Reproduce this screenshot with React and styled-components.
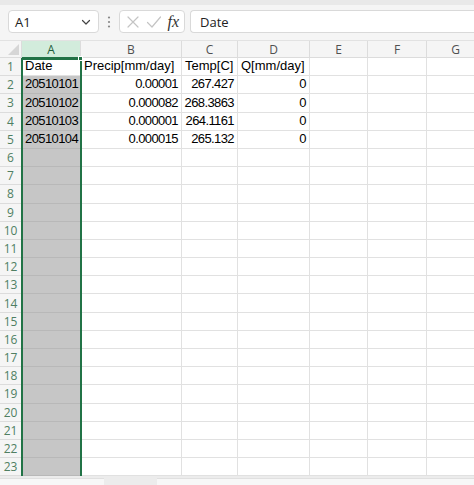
import React from 'react'
import styled, { createGlobalStyle } from 'styled-components'

const GlobalStyle = createGlobalStyle`
  html, body {
    margin: 0;
    padding: 0;
    background: #ffffff;
    overflow: hidden;
  }
  body {
    font-family: "Open Sans", "Noto Sans", sans-serif;
  }
`;

const columns = ['A', 'B', 'C', 'D', 'E', 'F', 'G'];
const widths = [59, 101, 56, 72, 58, 59, 58];

const data = [
  ['Date', 'Precip[mm/day]', 'Temp[C]', 'Q[mm/day]'],
  ['20510101', 0.00001, 267.427, 0],
  ['20510102', 0.000082, 268.3863, 0],
  ['20510103', 0.000001, 264.1161, 0],
  ['20510104', 0.000015, 265.132, 0],
];

const ROWS = 23;

const show = (v) => (typeof v === 'number' ? v.toFixed(7).replace(/0+$/, '').replace(/\.$/, '') : v);

function App() {
  return (
    <Page>
      <GlobalStyle />
      <TopStrip />
      <Toolbar>
        <NameBox>
          <span>A1</span>
          <svg width="12" height="12" viewBox="0 0 12 12">
            <path d="M2.5 4.5 L6 8 L9.5 4.5" fill="none" stroke="#444" strokeWidth="1.2" strokeLinecap="round" strokeLinejoin="round" />
          </svg>
        </NameBox>
        <Dots>
          <svg width="4" height="14" viewBox="0 0 4 14">
            <circle cx="2" cy="2.5" r="1.1" fill="#888" />
            <circle cx="2" cy="7" r="1.1" fill="#888" />
            <circle cx="2" cy="11.5" r="1.1" fill="#888" />
          </svg>
        </Dots>
        <ActionBox>
          <svg width="14" height="14" viewBox="0 0 14 14">
            <path d="M2 2 L12 12 M12 2 L2 12" stroke="#c4c4c4" strokeWidth="1.2" strokeLinecap="round" />
          </svg>
          <svg width="16" height="14" viewBox="0 0 16 14">
            <path d="M1.5 7.5 L6 12 L14.5 2" fill="none" stroke="#c4c4c4" strokeWidth="1.2" strokeLinecap="round" strokeLinejoin="round" />
          </svg>
          <Fx>fx</Fx>
        </ActionBox>
        <FormulaBox>Date</FormulaBox>
      </Toolbar>
      <SheetWrap>
        <Grid>
          <Corner>
            <svg width="12" height="12" viewBox="0 0 12 12">
              <path d="M12 1 L12 12 L1 12 Z" fill="#d6d6d6" />
            </svg>
          </Corner>
          {columns.map((c, i) => (
            <ColHeader key={c} $selected={i === 0}>{c}</ColHeader>
          ))}
          {Array.from({ length: ROWS }).map((_, r) => (
            <React.Fragment key={r}>
              <RowHeader>{r + 1}</RowHeader>
              {columns.map((c, ci) => {
                const v = data[r] ? data[r][ci] : undefined;
                const text = v === undefined ? '' : show(v);
                return (
                  <Cell
                    key={c}
                    $num={typeof v === 'number'}
                    $digits={/^[0-9.]+$/.test(text)}
                    $shaded={ci === 0 && r > 0}
                  >
                    {text}
                  </Cell>
                );
              })}
            </React.Fragment>
          ))}
        </Grid>
        <Selection />
        <Handle />
      </SheetWrap>
      <Footer>
        <TabPiece $w={105} />
        <TabGap $w={53} />
        <TabPiece $w={320} />
      </Footer>
    </Page>
  )
}

const Page = styled.div`
  width: 474px;
  height: 485px;
  overflow: hidden;
  background: #ffffff;
  display: flex;
  flex-direction: column;
`;

const TopStrip = styled.div`
  height: 5px;
  background: #e9e9e9;
  flex-shrink: 0;
`;

const Toolbar = styled.div`
  height: 35px;
  flex-shrink: 0;
  background: #f5f5f5;
  display: flex;
  align-items: center;
  padding: 0 0 2px 8px;
  box-sizing: border-box;
`;

const NameBox = styled.div`
  width: 91px;
  height: 23px;
  box-sizing: border-box;
  background: #ffffff;
  border: 1px solid #d9d9d9;
  border-radius: 4px;
  display: flex;
  align-items: center;
  justify-content: space-between;
  padding: 0 6px 0 6px;
  font-size: 13px;
  color: #222;
`;

const Dots = styled.div`
  width: 20px;
  display: flex;
  justify-content: center;
  align-items: center;
`;

const ActionBox = styled.div`
  width: 66px;
  height: 23px;
  box-sizing: border-box;
  background: #ffffff;
  border: 1px solid #d9d9d9;
  border-radius: 4px;
  display: flex;
  align-items: center;
  justify-content: space-between;
  padding: 0 5px 0 6px;
`;

const Fx = styled.span`
  font-family: "Liberation Serif", "DejaVu Serif", serif;
  font-style: italic;
  font-size: 16px;
  color: #333;
  line-height: 1;
`;

const FormulaBox = styled.div`
  margin-left: 5px;
  flex: 1;
  height: 23px;
  box-sizing: border-box;
  background: #ffffff;
  border: 1px solid #d9d9d9;
  border-right: none;
  border-radius: 4px 0 0 4px;
  display: flex;
  align-items: center;
  padding-left: 9px;
  font-size: 13px;
  color: #222;
`;

const SheetWrap = styled.div`
  position: relative;
  flex: 1;
  overflow: hidden;
  border-top: 1px solid #e2e2e2;
`;

const Grid = styled.div`
  display: grid;
  grid-template-columns: 22px ${widths.map((w) => w + 'px').join(' ')};
  grid-template-rows: 17px repeat(${ROWS}, 18.2px);
`;

const Corner = styled.div`
  background: #f5f5f5;
  border-right: 1px solid #dcdcdc;
  border-bottom: 1px solid #dcdcdc;
  display: flex;
  align-items: flex-end;
  justify-content: flex-end;
  padding: 0 2px 2px 0;
  box-sizing: border-box;
`;

const ColHeader = styled.div`
  background: ${(p) => (p.$selected ? '#d2ecdc' : '#f5f5f5')};
  color: ${(p) => (p.$selected ? '#1f5c3a' : '#505050')};
  border-right: 1px solid #dcdcdc;
  border-bottom: 1px solid ${(p) => (p.$selected ? '#217346' : '#dcdcdc')};
  box-sizing: border-box;
  font-size: 12px;
  display: flex;
  align-items: center;
  justify-content: center;
`;

const RowHeader = styled.div`
  background: #f5f5f5;
  color: #4f7f62;
  border-right: 1px solid #dcdcdc;
  border-bottom: 1px solid #dcdcdc;
  box-sizing: border-box;
  font-size: 12px;
  display: flex;
  align-items: center;
  justify-content: center;
`;

const Cell = styled.div`
  background: ${(p) => (p.$shaded ? '#c6c6c6' : '#ffffff')};
  border-right: 1px solid #e1e1e1;
  border-bottom: 1px solid ${(p) => (p.$shaded ? '#b8b8b8' : '#e1e1e1')};
  box-sizing: border-box;
  font-family: "Liberation Sans", Arial, sans-serif;
  font-size: 13px;
  letter-spacing: ${(p) => (p.$digits ? '-0.6px' : '0')};
  color: #000;
  white-space: nowrap;
  display: flex;
  align-items: flex-end;
  justify-content: ${(p) => (p.$num ? 'flex-end' : 'flex-start')};
  padding: 0 3px 1px 3px;
  line-height: 16px;
`;

const Selection = styled.div`
  position: absolute;
  left: 21px;
  top: 17px;
  width: 61px;
  bottom: 0;
  border: 2px solid #217346;
  border-bottom: none;
  box-sizing: border-box;
  pointer-events: none;
`;

const Handle = styled.div`
  position: absolute;
  left: 78px;
  top: 15px;
  width: 5px;
  height: 5px;
  background: #217346;
  border: 1px solid #ffffff;
  box-sizing: border-box;
`;

const Footer = styled.div`
  height: 9px;
  flex-shrink: 0;
  display: flex;
  background: #ececec;
  padding-top: 2px;
  box-sizing: border-box;
`;

const TabPiece = styled.div`
  width: ${(p) => p.$w}px;
  background: #f7f7f7;
  border-top: 1px solid #e0e0e0;
`;

const TabGap = styled.div`
  width: ${(p) => p.$w}px;
`;

export default App;
